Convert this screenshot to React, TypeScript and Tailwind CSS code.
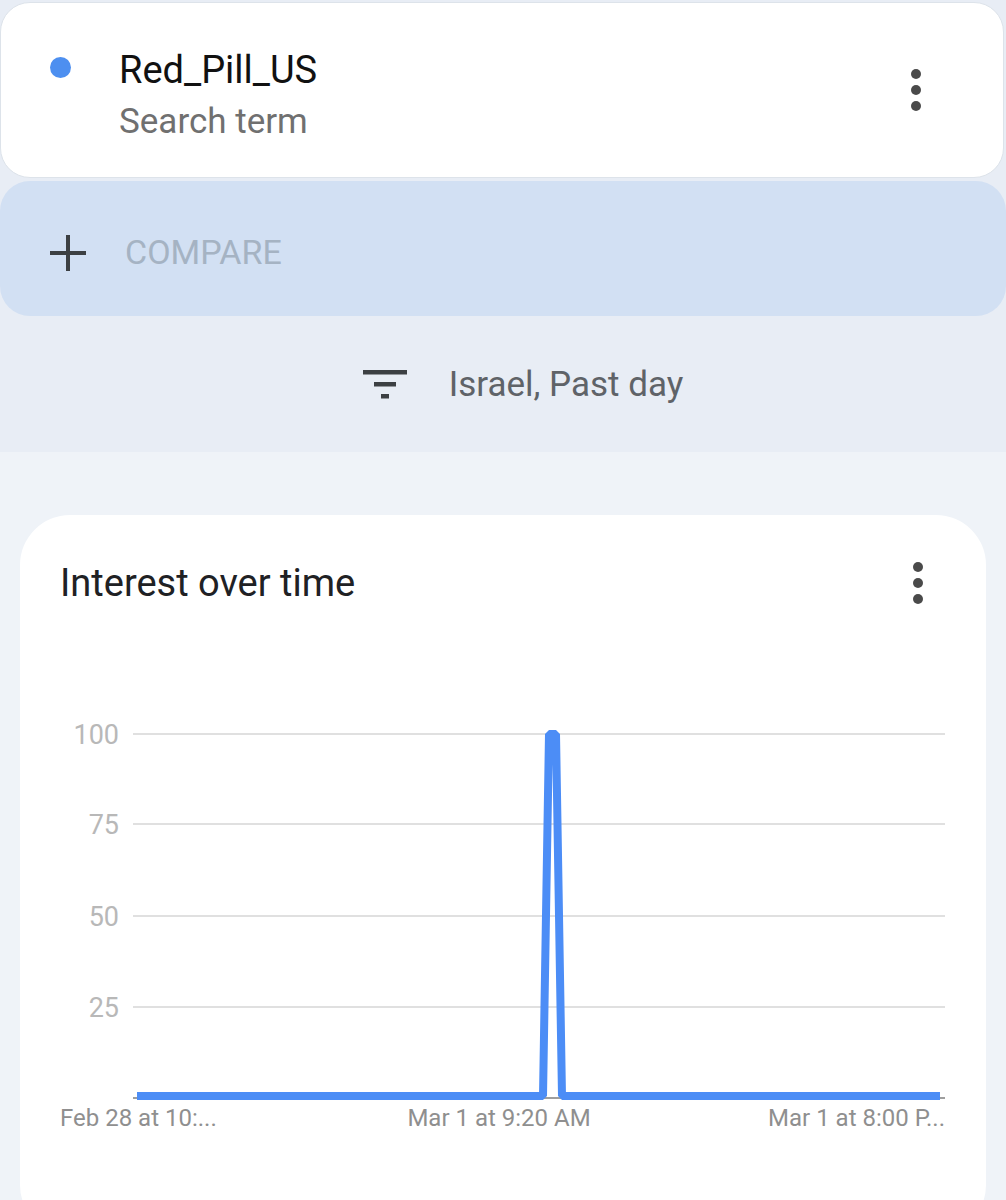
import React from "react";

const font = { fontFamily: "Roboto, 'Noto Sans', sans-serif" };

function Kebab() {
  return (
    <div className="flex flex-col items-center gap-[6px]">
      <span className="block w-[10px] h-[10px] rounded-full bg-[#4a4a4a]" />
      <span className="block w-[10px] h-[10px] rounded-full bg-[#4a4a4a]" />
      <span className="block w-[10px] h-[10px] rounded-full bg-[#4a4a4a]" />
    </div>
  );
}

function Chart() {
  const grid = [
    { y: 34, label: "100" },
    { y: 124, label: "75" },
    { y: 216, label: "50" },
    { y: 307, label: "25" },
  ];
  return (
    <svg width="966" height="440" viewBox="0 0 966 440" className="block" style={font}>
      {grid.map((g) => (
        <g key={g.label}>
          <line x1="113" x2="925" y1={g.y} y2={g.y} stroke="#e0e0e0" strokeWidth="2" />
          <text x="99" y={g.y + 10} textAnchor="end" fontSize="27" fill="#b8b8b8">
            {g.label}
          </text>
        </g>
      ))}
      <line x1="113" x2="925" y1="398" y2="398" stroke="#9e9e9e" strokeWidth="2" />
      <polyline
        points="117,396 523,396 529,34 536,34 542,396 920,396"
        fill="none"
        stroke="#4c8df6"
        strokeWidth="8"
        strokeLinejoin="bevel"
      />
      <text x="40" y="426" fontSize="24" fill="#8f8f8f">Feb 28 at 10:...</text>
      <text x="479" y="426" fontSize="24" fill="#8f8f8f" textAnchor="middle">Mar 1 at 9:20 AM</text>
      <text x="925" y="426" fontSize="24" fill="#8f8f8f" textAnchor="end">Mar 1 at 8:00 P...</text>
    </svg>
  );
}

export default function App() {
  return (
    <main className="w-[1006px] h-[1200px] overflow-hidden bg-[#eff3f8]" style={font}>
      <section className="h-[452px] bg-[#e8edf5] flex flex-col pt-[2px]">
        <div className="mr-[2px] h-[176px] bg-white rounded-[30px] border border-[#dde3ea] flex items-start pt-[44px] pl-[49px] pr-[82px]">
          <span className="mt-[10px] w-[21px] h-[21px] rounded-full bg-[#4d8ff0]" />
          <div className="ml-[48px] flex flex-col">
            <span className="text-[38px] leading-[46px] text-[#111]">Red_Pill_US</span>
            <span className="text-[35px] leading-[44px] text-[#707070] mt-[7px]">Search term</span>
          </div>
          <div className="ml-auto mt-[22px]">
            <Kebab />
          </div>
        </div>
        <div className="mt-[3px] h-[135px] bg-[#d2e0f3] rounded-[30px] flex items-center pl-[50px] pt-[8px]">
          <svg width="36" height="36" viewBox="0 0 36 36">
            <rect x="16" y="0" width="4" height="36" fill="#3c4043" />
            <rect x="0" y="16" width="36" height="4" fill="#3c4043" />
          </svg>
          <span className="ml-[39px] text-[34px] text-[#a5b3c3]">COMPARE</span>
        </div>
        <div className="flex-1 flex items-center justify-center gap-[42px] pl-[40px] pt-[2px]">
          <svg width="44" height="30" viewBox="0 0 44 30">
            <rect x="0" y="0" width="44" height="4.5" fill="#3c4043" />
            <rect x="11" y="12" width="22" height="4.5" fill="#3c4043" />
            <rect x="18" y="24" width="8" height="4.5" fill="#3c4043" />
          </svg>
          <span className="text-[35px] text-[#5f6368]">Israel, Past day</span>
        </div>
      </section>
      <section className="pt-[63px] px-[20px]">
        <div className="h-[720px] bg-white rounded-[50px] pt-[48px]">
          <div className="flex items-center justify-between pl-[40px] pr-[63px] h-[40px]">
            <span className="text-[38px] text-[#202124]">Interest over time</span>
            <Kebab />
          </div>
          <div className="mt-[97px]">
            <Chart />
          </div>
        </div>
      </section>
    </main>
  );
}
